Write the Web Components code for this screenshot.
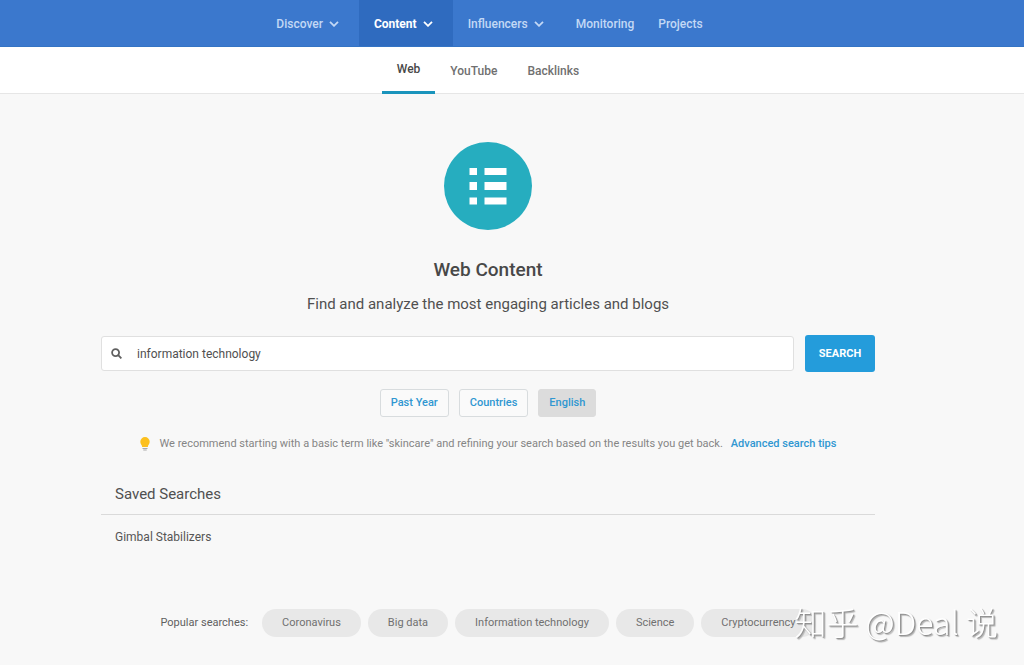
<!DOCTYPE html>
<html lang="en">
<head>
<meta charset="utf-8">
<title>Web Content</title>
<style>
  html { background: #f8f8f8; }
  body { margin: 0; min-height: 100vh; font: 12px/20px Roboto, "Noto Sans CJK SC", sans-serif; color: #505050; }
</style>
</head>
<body>
<content-app></content-app>

<script>
const define = (name, html, setup) => customElements.define(name, class extends HTMLElement {
  connectedCallback() {
    if (this.shadowRoot) return;
    const t = document.createElement('template');
    t.innerHTML = html;
    this.attachShadow({ mode: 'open' }).append(t.content.cloneNode(true));
    if (setup) setup(this, this.shadowRoot);
  }
});

define('nav-item', `
  <style>
    :host { display: block; }
    a { box-sizing: border-box; display: flex; align-items: center; height: 46px; padding: 1px 12px 0; color: #c3d8f5; font-weight: 500; text-decoration: none; white-space: nowrap; }
    svg { display: none; width: 10px; height: 6px; margin-left: 6px; fill: none; stroke: currentColor; stroke-width: 1.8; }
    :host([menu]) a { padding: 1px 20px 0 15px; }
    :host([menu]) svg { display: block; }
    :host([active]) a { background: #2f6bbf; color: #fff; font-weight: 700; }
  </style>
  <a href="#"><slot></slot><svg viewBox="0 0 10 6" aria-hidden="true"><path d="M1 .8 5 4.8 9 .8"/></svg></a>`);

define('top-nav', `
  <style>
    :host { display: block; background: #3b78cd; border-bottom: 1px solid #3474c4; }
    nav { display: flex; justify-content: center; padding-right: 48px; }
  </style>
  <nav aria-label="Main"><slot></slot></nav>`);

define('tab-link', `
  <style>
    :host { display: block; }
    a { box-sizing: border-box; display: block; height: 47px; padding: 14px 15px 0; color: #707070; font-weight: 500; text-decoration: none; }
    :host([active]) a { padding-top: 12px; border-bottom: 3px solid #1a94bc; color: #484848; }
  </style>
  <a href="#"><slot></slot></a>`);

define('sub-nav', `
  <style>
    :host { display: block; height: 46px; background: #fff; border-bottom: 1px solid #e6e6e6; }
    nav { display: flex; justify-content: center; padding-right: 48px; }
  </style>
  <nav aria-label="Content type"><slot></slot></nav>`);

define('page-hero', `
  <style>
    :host { display: flex; flex-direction: column; align-items: center; text-align: center; }
    svg { width: 88px; height: 88px; }
    h1 { margin: 28px 0 0; font-size: 19px; line-height: 24px; font-weight: 500; color: #484848; }
    p { margin: 12px 0 0; font-size: 15px; line-height: 20px; }
  </style>
  <svg viewBox="0 0 88 88" aria-hidden="true">
    <circle cx="44" cy="44" r="44" fill="#26adbf"/>
    <path fill="#fff" d="M25.5 26h7.5v7h-7.5zM40.5 26h22v7h-22zM25.5 40h7.5v8h-7.5zM40.5 40h22v8h-22zM25.5 55.5h7.5v7h-7.5zM40.5 55.5h22v7h-22z"/>
  </svg>
  <h1><slot name="title"></slot></h1>
  <p><slot></slot></p>`);

define('search-box', `
  <style>
    :host { display: block; }
    form { display: flex; align-items: center; gap: 11px; margin: 0; }
    .field { box-sizing: border-box; flex: 1; display: flex; align-items: center; height: 35px; padding: 0 9px; background: #fff; border: 1px solid #e0e0e0; border-radius: 3px; }
    svg { flex: none; width: 11px; height: 11px; fill: none; stroke: #606060; stroke-width: 1.8; }
    input { flex: 1; min-width: 0; margin: 0 0 0 15px; padding: 0; border: 0; outline: 0; background: none; font: inherit; color: #505050; }
    button { flex: none; width: 70px; height: 37px; padding: 0; border: 0; border-radius: 3px; background: #249cdb; color: #fff; font: 700 11px/16px Roboto, sans-serif; }
  </style>
  <form role="search">
    <div class="field">
      <svg viewBox="0 0 11 11" aria-hidden="true"><circle cx="4.6" cy="4.6" r="3.5"/><path d="m7.2 7.2 3.2 3.2"/></svg>
      <input type="text" aria-label="Search web content">
    </div>
    <button type="button">SEARCH</button>
  </form>`, (el, root) => { root.querySelector('input').value = el.getAttribute('value') || ''; });

define('filter-button', `
  <style>
    :host { display: block; }
    button { display: block; height: 28px; padding: 0 10px; border: 1px solid #d8dcde; border-radius: 3px; background: #fafafa; color: #3097d1; font: 500 11px/16px Roboto, sans-serif; }
    :host([selected]) button { background: #dcdcdc; border-color: #dcdcdc; }
  </style>
  <button type="button"><slot></slot></button>`);

define('search-tip', `
  <style>
    :host { display: flex; justify-content: center; align-items: center; font-size: 11px; line-height: 16px; color: #858585; }
    svg { flex: none; width: 10px; height: 14px; margin-right: 10px; }
    a { margin-left: 8px; color: #3097d1; font-weight: 500; text-decoration: none; white-space: nowrap; }
  </style>
  <svg viewBox="0 0 10 14" aria-hidden="true"><path fill="#fcc01e" d="M5 0a4.700 4.700 0 0 0-4.700 4.700C.3 7 2 7.800 2.200 10h5.600C8 7.800 9.700 7 9.700 4.700A4.700 4.700 0 0 0 5 0z"/><path fill="#a9a9a9" d="M2.500 11h5v1h-5zM3.300 12.500h3.400v1H3.300z"/></svg>
  <span><slot></slot></span><a href="#">Advanced search tips</a>`);

define('saved-searches', `
  <style>
    :host { display: block; }
    h2 { margin: 0; padding: 0 14px 10px; border-bottom: 1px solid #dadada; font-size: 15px; line-height: 20px; font-weight: 400; }
    div { padding: 12px 14px 0; }
    ::slotted(a) { color: #555; text-decoration: none; }
  </style>
  <h2>Saved Searches</h2>
  <div><slot></slot></div>`);

define('search-chip', `
  <style>
    :host { display: block; }
    a { display: block; padding: 6px 20px; border-radius: 14px; background: #e8e8e8; color: #707070; font-size: 11px; line-height: 16px; text-decoration: none; white-space: nowrap; }
  </style>
  <a href="#"><slot></slot></a>`);

define('popular-searches', `
  <style>
    :host { display: flex; justify-content: center; align-items: center; gap: 7px; font-size: 11px; line-height: 16px; color: #606060; }
    span { margin-right: 7px; white-space: nowrap; }
  </style>
  <span>Popular searches:</span><slot></slot>`);

define('water-mark', `
  <style>
    :host { position: fixed; right: 26px; bottom: 22px; font: 300 32px/44px "Noto Sans CJK SC", sans-serif; color: #fff; text-shadow: 1px 1px 1px #888, 2px 2px 1px #bbb; white-space: nowrap; pointer-events: none; }
  </style>
  <slot></slot>`);

define('content-app', `
  <style>
    :host { display: block; }
    main { box-sizing: border-box; max-width: 1024px; margin: 0 auto; padding: 48px 149px 28px 101px; }
    search-box { margin-top: 21px; }
    .filters { display: flex; justify-content: center; gap: 10px; margin: 17px 0 19px; }
    saved-searches { margin-top: 32px; }
    popular-searches { margin-top: 62px; }
  </style>
  <header>
    <top-nav>
      <nav-item menu>Discover</nav-item>
      <nav-item menu active>Content</nav-item>
      <nav-item menu>Influencers</nav-item>
      <nav-item>Monitoring</nav-item>
      <nav-item>Projects</nav-item>
    </top-nav>
    <sub-nav>
      <tab-link active>Web</tab-link>
      <tab-link>YouTube</tab-link>
      <tab-link>Backlinks</tab-link>
    </sub-nav>
  </header>
  <main>
    <page-hero><span slot="title">Web Content</span>Find and analyze the most engaging articles and blogs</page-hero>
    <search-box value="information technology"></search-box>
    <div class="filters">
      <filter-button>Past Year</filter-button>
      <filter-button>Countries</filter-button>
      <filter-button selected>English</filter-button>
    </div>
    <search-tip>We recommend starting with a basic term like "skincare" and refining your search based on the results you get back.</search-tip>
    <saved-searches><a href="#">Gimbal Stabilizers</a></saved-searches>
    <popular-searches>
      <search-chip>Coronavirus</search-chip>
      <search-chip>Big data</search-chip>
      <search-chip>Information technology</search-chip>
      <search-chip>Science</search-chip>
      <search-chip>Cryptocurrency</search-chip>
    </popular-searches>
  </main>
  <water-mark>知乎 @Deal 说</water-mark>`);
</script>
</body>
</html>
